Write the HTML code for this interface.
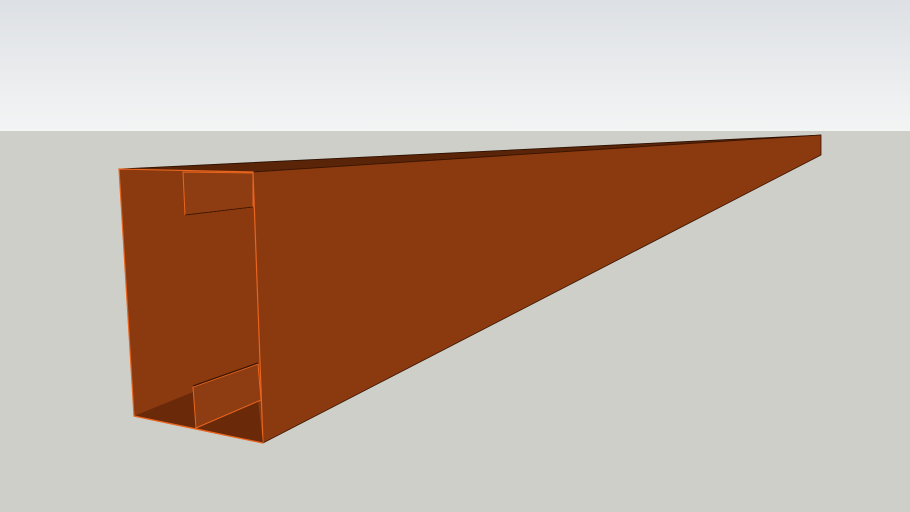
<!DOCTYPE html>
<html><head><style>
html,body{margin:0;padding:0;width:910px;height:512px;overflow:hidden}
body{background:linear-gradient(#dde0e4 0px,#eef0f1 100px,#f3f4f4 131px,#cfcfca 131px,#cfcfca 512px)}
</style></head><body>
<svg width="910" height="512" viewBox="0 0 910 512" style="position:absolute;left:0;top:0">
<!-- top face -->
<polygon points="119,169 253,172 821,135" fill="#5a2408" stroke="#2a1000" stroke-width="0.8"/>
<!-- side face -->
<polygon points="253,172 821,135 821,155 263,443" fill="#8b3a10" stroke="#3a1500" stroke-width="0.8"/>
<!-- front face -->
<polygon points="119,169 253,172 263,443 134,416" fill="#8b3a10" stroke="#e8651f" stroke-width="1.2"/>
<!-- inner floor -->
<polygon points="134,416 193,392 196,428" fill="#6a2a0a"/>
<polygon points="196,428 258,400 263,443" fill="#6a2a0a"/>
<!-- upper flange -->
<polygon points="183,172 253,173 253,207 185,215" fill="#8e3c11" stroke="#e8651f" stroke-width="1"/>
<line x1="185" y1="215" x2="253" y2="207" stroke="#3a1500" stroke-width="1"/>
<!-- lower flange -->
<polygon points="193,387 258,364 261,400 196,428" fill="#8e3c11" stroke="#e8651f" stroke-width="1"/>
<line x1="193" y1="386" x2="258" y2="363" stroke="#3a1500" stroke-width="1.2"/>
<line x1="134" y1="416" x2="263" y2="443" stroke="#e8651f" stroke-width="1.2"/>
</svg>
</body></html>
